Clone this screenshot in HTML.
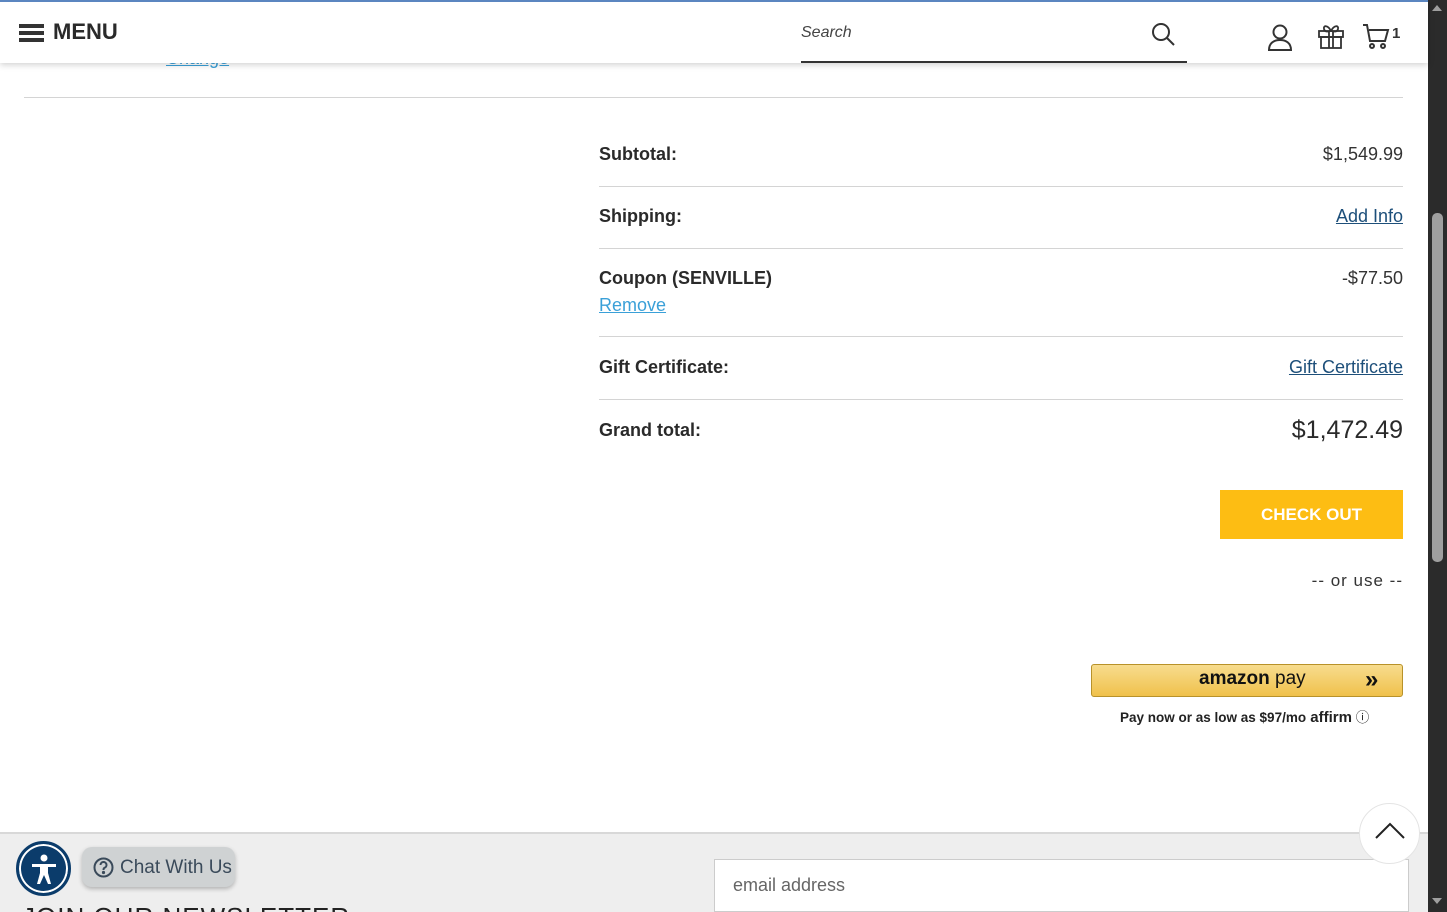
<!DOCTYPE html>
<html style="overflow:hidden;height:912px"><head><meta charset="utf-8"><style>
*{margin:0;padding:0;box-sizing:border-box}
body{width:1447px;height:912px;overflow:hidden;background:#fff;font-family:"Liberation Sans",sans-serif;color:#222;position:relative}
.a{position:absolute}
.hdr{left:0;top:0;width:1428px;height:63px;background:#fff;border-top:2px solid #5b86c0;box-shadow:0 2px 6px rgba(0,0,0,.18);z-index:5}
.row{left:599px;width:804px;border-bottom:1px solid #d4d4d4}
.lbl{font-weight:bold;font-size:18px;color:#2a2a2a}
.lnk{color:#1d4f7a;text-decoration:underline;font-size:18px}
</style></head><body>
<div class="a" style="left:166px;top:48px;color:#3aa0d8;text-decoration:underline;font-size:18px">Change</div>
<div class="a hdr">
 <div class="a" style="left:19px;top:22px;width:25px;height:4px;background:#333;box-shadow:0 7px 0 #333,0 14px 0 #333"></div>
 <div class="a" style="left:53px;top:17px;font-weight:bold;font-size:22px;color:#2a2a2a">MENU</div>
 <div class="a" style="left:801px;top:22px;font-style:italic;font-size:16px;color:#444">Search</div>
 <div class="a" style="left:801px;top:59px;width:386px;height:2px;background:#333"></div>
 <svg class="a" style="left:1150px;top:19px" width="26" height="26" viewBox="0 0 26 26" fill="none" stroke="#333" stroke-width="2"><circle cx="11" cy="11" r="8"/><path d="M17 17l7 7"/></svg>
 <svg class="a" style="left:1267px;top:21px" width="26" height="28" viewBox="0 0 26 28" fill="none" stroke="#333" stroke-width="2"><circle cx="13" cy="9" r="6.5"/><path d="M2 27c0-7 5-10 11-10s11 3 11 10z"/></svg>
 <svg class="a" style="left:1317px;top:20px" width="28" height="28" viewBox="0 0 28 28" fill="none" stroke="#333" stroke-width="1.8"><rect x="2" y="9" width="24" height="6"/><rect x="4" y="15" width="20" height="11"/><path d="M12 9v17M16 9v17M14 9c-3-6-8-6-7-2s5 2 7 2c2 0 6 2 7-2s-4-4-7 2"/></svg>
 <svg class="a" style="left:1362px;top:20px" width="28" height="28" viewBox="0 0 28 28" fill="none" stroke="#333" stroke-width="2"><path d="M1 3h4l3 16h15l3-11H7"/><circle cx="10" cy="24" r="2"/><circle cx="21" cy="24" r="2"/></svg>
 <div class="a" style="left:1392px;top:23px;font-weight:bold;font-size:15px;color:#333">1</div>
</div>
<div class="a" style="left:24px;top:97px;width:1379px;height:1px;background:#d4d4d4"></div>
<div class="a row" style="top:124px;height:63px"><span class="a lbl" style="left:0;top:20px">Subtotal:</span><span class="a" style="right:0;top:20px;font-size:18px;color:#333">$1,549.99</span></div>
<div class="a row" style="top:187px;height:62px"><span class="a lbl" style="left:0;top:19px">Shipping:</span><span class="a lnk" style="right:0;top:19px">Add Info</span></div>
<div class="a row" style="top:249px;height:88px"><span class="a lbl" style="left:0;top:19px">Coupon (SENVILLE)</span><span class="a" style="left:0;top:46px;color:#3aa0d8;text-decoration:underline;font-size:18px">Remove</span><span class="a" style="right:0;top:19px;font-size:18px;color:#333">-$77.50</span></div>
<div class="a row" style="top:337px;height:63px"><span class="a lbl" style="left:0;top:20px">Gift Certificate:</span><span class="a lnk" style="right:0;top:20px">Gift Certificate</span></div>
<div class="a" style="left:599px;top:420px" ><span class="lbl">Grand total:</span></div>
<div class="a" style="right:44px;top:416px;font-size:25px;color:#2a2a2a">$1,472.49</div>
<div class="a" style="left:1220px;top:490px;width:183px;height:49px;background:#fdbd13;color:#fff;font-weight:bold;font-size:17px;text-align:center;line-height:49px">CHECK OUT</div>
<div class="a" style="right:44px;top:571px;font-size:17px;color:#333;letter-spacing:1px">-- or use --</div>
<div class="a" style="left:1091px;top:664px;width:312px;height:33px;border:1px solid #b8922a;border-radius:3px;background:linear-gradient(#f7dc8e,#f0c14b)">
 <span class="a" style="left:107px;top:3px;font-size:19px;color:#111"><b>amazon</b> pay</span>
 <span class="a" style="left:273px;top:1px;font-size:24px;font-weight:bold;color:#111">»</span>
</div>
<div class="a" style="left:1120px;top:706px;font-size:13.5px;color:#222;font-weight:bold;white-space:nowrap">Pay now or as low as $97/mo<span style="font-size:15px"> affirm</span> <span style="font-weight:normal">ⓘ</span></div>
<div class="a" style="left:0;top:832px;width:1428px;height:80px;background:#eeeeee;border-top:2px solid #d8d8d8;overflow:hidden">
 <div class="a" style="left:22px;top:68px;font-size:26px;color:#222;letter-spacing:1px;white-space:nowrap">JOIN OUR NEWSLETTER</div>
</div>
<div class="a" style="left:714px;top:859px;width:695px;height:53px;background:#fff;border:1px solid #ccc"><span class="a" style="left:18px;top:15px;font-size:18px;color:#666">email address</span></div>
<div class="a" style="left:16px;top:841px;width:55px;height:55px;border-radius:50%;background:#0b3c6b;border:3px solid #0b3c6b;box-shadow:inset 0 0 0 2px #fff"></div>
<svg class="a" style="left:29px;top:853px" width="30" height="32" viewBox="0 0 30 32" fill="#fff"><circle cx="15" cy="5" r="3.5"/><path d="M3 11h24v3h-8v6l3 11h-3l-4-9-4 9h-3l3-11v-6H3z"/></svg>
<div class="a" style="left:82px;top:847px;width:153px;height:40px;border-radius:10px;background:#cfd2d3;box-shadow:0 2px 4px rgba(0,0,0,.25)">
 <svg class="a" style="left:11px;top:10px" width="21" height="21" viewBox="0 0 21 21" fill="none" stroke="#3a4a5a" stroke-width="2"><circle cx="10.5" cy="10.5" r="9"/><path d="M7.5 8a3 3 0 1 1 4 2.8c-1 .4-1 1-1 2.2"/><circle cx="10.5" cy="15.5" r=".6" fill="#3a4a5a"/></svg>
 <span class="a" style="left:38px;top:10px;font-size:19px;color:#3a4a5a">Chat With Us</span></div>
<div class="a" style="left:1359px;top:803px;width:61px;height:61px;border-radius:50%;background:#fff;border:1px solid #e4e4e4"></div>
<svg class="a" style="left:1374px;top:818px" width="32" height="24" viewBox="0 0 32 24" fill="none" stroke="#222" stroke-width="2"><path d="M2 20L16 6l14 14"/></svg>
<div class="a" style="left:1428px;top:0;width:19px;height:912px;background:#2b2b2b"></div>
<div class="a" style="left:1432px;top:213px;width:11px;height:349px;background:#9f9f9f;border-radius:5px"></div>
<div class="a" style="left:1432px;top:5px;border:5px solid transparent;border-bottom:6px solid #9f9f9f;border-top:0"></div>
<div class="a" style="left:1432px;top:898px;border:5px solid transparent;border-top:6px solid #9f9f9f;border-bottom:0"></div>
</body></html>
